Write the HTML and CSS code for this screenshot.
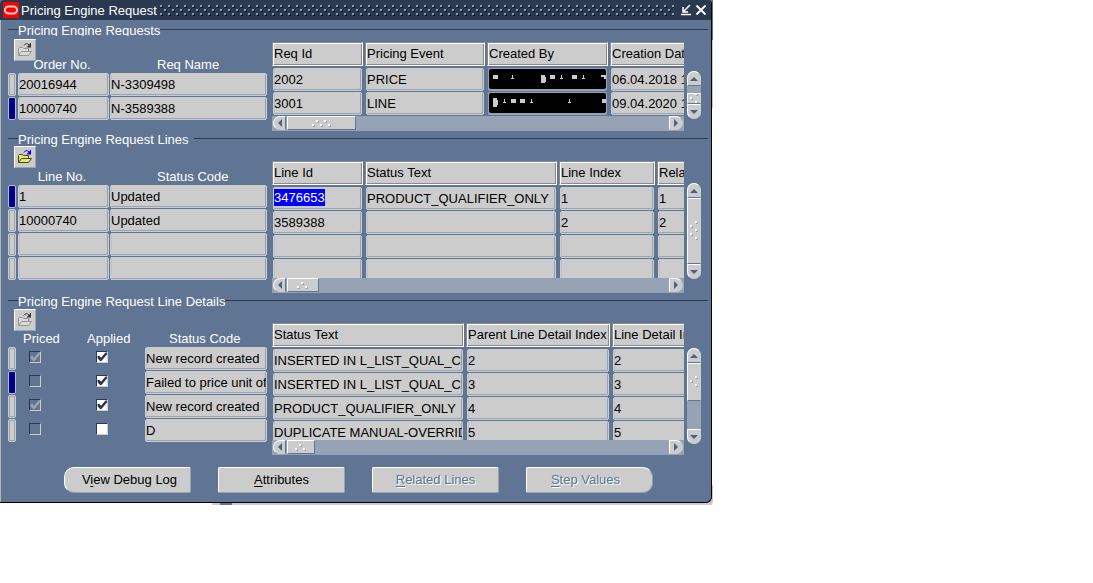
FILE: index.html
```html
<!DOCTYPE html>
<html lang="en">
<head>
<meta charset="utf-8">
<title>Pricing Engine Request</title>
<link rel="stylesheet" href="styles.css">
</head>
<body>
<svg class="defs" aria-hidden="true">
  <defs>
    <pattern id="grip" width="8" height="8" patternUnits="userSpaceOnUse">
      <path fill="#0b111b" d="M1 1h2v2h-2zM5 5h2v2h-2z"/>
      <path fill="#90a0b4" d="M0 0h2v2h-2zM4 4h2v2h-2z"/>
    </pattern>
    <symbol id="folder" viewBox="0 0 16 16">
      <path class="f-back" d="M1.500 13.500V6.500L2.500 5.500H5.500L6.500 6.500H11.500V9.500"/>
      <path class="f-front" d="M1.500 13.500L4.500 9.500H14.500L11.500 13.500Z"/>
      <path class="f-arrow" d="M7 3.500Q9 0 12 3"/>
      <path class="f-head" d="M14 0.500V5.500H9.500Z"/>
    </symbol>
    <symbol id="knobs" viewBox="0 0 20 9">
      <path fill="#95a3b5" d="M1 6h2v2h-2zM5 2h2v2h-2zM9 6h2v2h-2zM13 2h2v2h-2zM17 6h2v2h-2z"/>
      <path fill="#fff" d="M0 5h2v2h-2zM4 1h2v2h-2zM8 5h2v2h-2zM12 1h2v2h-2zM16 5h2v2h-2z"/>
    </symbol>
    <symbol id="knobs3" viewBox="0 0 12 9">
      <path fill="#95a3b5" d="M1 6h2v2h-2zM5 2h2v2h-2zM9 6h2v2h-2z"/>
      <path fill="#fff" d="M0 5h2v2h-2zM4 1h2v2h-2zM8 5h2v2h-2z"/>
    </symbol>
    <symbol id="vknobs" viewBox="0 0 9 20">
      <path fill="#95a3b5" d="M6 1h2v2h-2zM1 5h2v2h-2zM6 9h2v2h-2zM1 13h2v2h-2zM6 17h2v2h-2z"/>
      <path fill="#fff" d="M5 0h2v2h-2zM0 4h2v2h-2zM5 8h2v2h-2zM0 12h2v2h-2zM5 16h2v2h-2z"/>
    </symbol>
    <symbol id="vknobs3" viewBox="0 0 9 12">
      <path fill="#95a3b5" d="M6 1h2v2h-2zM1 5h2v2h-2zM6 9h2v2h-2z"/>
      <path fill="#fff" d="M5 0h2v2h-2zM0 4h2v2h-2zM5 8h2v2h-2z"/>
    </symbol>
    <symbol id="left" viewBox="0 0 8 8"><path fill="#4a6285" d="M6 0v8L2 4z"/></symbol>
    <symbol id="right" viewBox="0 0 8 8"><path fill="#4a6285" d="M2 0v8l4-4z"/></symbol>
    <symbol id="up" viewBox="0 0 8 8"><path fill="#4a6285" d="M0 6h8L4 2z"/></symbol>
    <symbol id="down" viewBox="0 0 8 8"><path fill="#4a6285" d="M0 2h8L4 6z"/></symbol>
  </defs>
</svg>
<div class="frame">
<main class="window">
  <header class="titlebar">
    <svg class="logo" viewBox="0 0 16 16" aria-hidden="true"><rect width="16" height="16" fill="#f00"/><rect x="2" y="4.500" width="12" height="7" rx="3.500" fill="none" stroke="#ffd0d0" stroke-width="2"/></svg>
    <h1>Pricing Engine Request</h1>
    <svg class="grip" aria-hidden="true"><rect width="100%" height="11" fill="url(#grip)"/></svg>
    <button class="winbtn" aria-label="Minimize"><svg viewBox="0 0 12 12"><path d="M10 1L4 7M3 3v5h5M1 10.500h10" fill="none" stroke="#fff" stroke-width="1.500"/></svg></button>
    <button class="winbtn" aria-label="Close"><svg viewBox="0 0 12 12"><path d="M1.500 1.500l9 9M10.500 1.500l-9 9" fill="none" stroke="#fff" stroke-width="1.800"/></svg></button>
  </header>

  <section class="requests">
    <h2 class="legend clipped"><span>Pricing Engine Requests</span></h2>
    <div class="block">
      <div class="pane">
        <button class="folder" disabled aria-label="Open request folder"><svg><use href="#folder"/></svg></button>
        <table class="fixed">
          <colgroup><col class="c-mark"><col class="c-no"><col></colgroup>
          <thead><tr><td></td><th class="mid">Order No.</th><th class="name">Req Name</th></tr></thead>
          <tbody>
            <tr><td><button class="mark" aria-label="Select request 1"></button></td><td><input aria-label="Order No. 1" value="20016944"></td><td><input aria-label="Req Name 1" value="N-3309498"></td></tr>
            <tr><td><button class="mark current" aria-label="Select request 2"></button></td><td><input aria-label="Order No. 2" value="10000740"></td><td><input aria-label="Req Name 2" value="N-3589388"></td></tr>
          </tbody>
        </table>
      </div>
      <div class="grid">
        <div class="view">
          <table>
            <colgroup><col class="w93"><col class="w122"><col class="w123"><col class="w123"></colgroup>
            <thead><tr><th><div>Req Id</div></th><th><div>Pricing Event</div></th><th><div>Created By</div></th><th><div>Creation Date</div></th></tr></thead>
            <tbody>
              <tr><td><input aria-label="Req Id 1" value="2002"></td><td><input aria-label="Pricing Event 1" value="PRICE"></td>
                <td><div class="hidden-name"><svg role="img" aria-label="Hidden"><path d="M4 6h5v4h-5zM23 6h1v3h1v1h-3v-1h1zM52 6h4v2h1v5h-1v1h-4zM61 6h5v4h-5zM72 6h1v3h1v1h-3v-1h1zM83 6h5v4h-5zM94 6h1v3h1v1h-3v-1h1zM112 6h5v4h-2v-2h-3z"/></svg></div></td>
                <td><input aria-label="Creation Date 1" value="06.04.2018 11:02"></td></tr>
              <tr><td><input aria-label="Req Id 2" value="3001"></td><td><input aria-label="Pricing Event 2" value="LINE"></td>
                <td><div class="hidden-name"><svg role="img" aria-label="Hidden"><path d="M4 5h4v2h1v5h-1v2h-4zM15 6h1v3h1v1h-3v-1h1zM22 6h5v4h-5zM31 6h5v4h-5zM42 6h1v3h1v1h-3v-1h1zM80 6h1v3h1v1h-3v-1h1zM113 6h4v4h-4z"/></svg></div></td>
                <td><input aria-label="Creation Date 2" value="09.04.2020 11:02"></td></tr>
            </tbody>
          </table>
        </div>
        <div class="hscroll"><button class="end first" aria-label="Scroll left"><svg><use href="#left"/></svg></button><div class="thumb long"><svg class="k5"><use href="#knobs"/></svg></div><button class="end last" aria-label="Scroll right"><svg><use href="#right"/></svg></button></div>
      </div>
      <div class="vscroll"><button class="end top" aria-label="Scroll up"><svg><use href="#up"/></svg></button><span class="track"></span><div class="thumb tiny"><svg class="v3"><use href="#vknobs3"/></svg></div><button class="end bottom" aria-label="Scroll down"><svg><use href="#down"/></svg></button></div>
    </div>
  </section>

  <section class="lines">
    <h2 class="legend spaced"><span>Pricing Engine Request Lines</span></h2>
    <div class="block">
      <div class="pane">
        <button class="folder" aria-label="Open line folder"><svg><use href="#folder"/></svg></button>
        <table class="fixed">
          <colgroup><col class="c-mark"><col class="c-no"><col></colgroup>
          <thead><tr><td></td><th class="mid">Line No.</th><th class="name">Status Code</th></tr></thead>
          <tbody>
            <tr><td><button class="mark current" aria-label="Select line 1"></button></td><td><input aria-label="Line No. 1" value="1"></td><td><input aria-label="Status Code 1" value="Updated"></td></tr>
            <tr><td><button class="mark" aria-label="Select line 2"></button></td><td><input aria-label="Line No. 2" value="10000740"></td><td><input aria-label="Status Code 2" value="Updated"></td></tr>
            <tr><td><button class="mark" aria-label="Select line 3"></button></td><td><input aria-label="Line No. 3"></td><td><input aria-label="Status Code 3"></td></tr>
            <tr><td><button class="mark" aria-label="Select line 4"></button></td><td><input aria-label="Line No. 4"></td><td><input aria-label="Status Code 4"></td></tr>
          </tbody>
        </table>
      </div>
      <div class="grid">
        <div class="view">
          <table>
            <colgroup><col class="w93"><col class="w194"><col class="w98"><col class="w98"></colgroup>
            <thead><tr><th><div>Line Id</div></th><th><div>Status Text</div></th><th><div>Line Index</div></th><th><div>Related Line</div></th></tr></thead>
            <tbody>
              <tr><td><div class="field" role="textbox" aria-label="Line Id 1"><mark>3476653</mark></div></td><td><input aria-label="Status Text 1" value="PRODUCT_QUALIFIER_ONLY"></td><td><input aria-label="Line Index 1" value="1"></td><td><input aria-label="Related Line 1" value="1"></td></tr>
              <tr><td><input aria-label="Line Id 2" value="3589388"></td><td><input aria-label="Status Text 2"></td><td><input aria-label="Line Index 2" value="2"></td><td><input aria-label="Related Line 2" value="2"></td></tr>
              <tr><td><input aria-label="Line Id 3"></td><td><input aria-label="Status Text 3"></td><td><input aria-label="Line Index 3"></td><td><input aria-label="Related Line 3"></td></tr>
              <tr><td><input aria-label="Line Id 4"></td><td><input aria-label="Status Text 4"></td><td><input aria-label="Line Index 4"></td><td><input aria-label="Related Line 4"></td></tr>
            </tbody>
          </table>
        </div>
        <div class="hscroll"><button class="end first" aria-label="Scroll left"><svg><use href="#left"/></svg></button><div class="thumb mini"><svg class="k3"><use href="#knobs3"/></svg></div><button class="end last" aria-label="Scroll right"><svg><use href="#right"/></svg></button></div>
      </div>
      <div class="vscroll"><button class="end top" aria-label="Scroll up"><svg><use href="#up"/></svg></button><div class="thumb full"><svg class="v5"><use href="#vknobs"/></svg></div><button class="end bottom" aria-label="Scroll down"><svg><use href="#down"/></svg></button></div>
    </div>
  </section>

  <section class="details">
    <h2 class="legend"><span>Pricing Engine Request Line Details</span></h2>
    <div class="block">
      <div class="pane">
        <button class="folder" disabled aria-label="Open detail folder"><svg><use href="#folder"/></svg></button>
        <table class="fixed">
          <colgroup><col class="c-mark"><col class="c-priced"><col class="c-applied"><col></colgroup>
          <thead><tr><td></td><th class="priced">Priced</th><th class="applied">Applied</th><th class="status">Status Code</th></tr></thead>
          <tbody>
            <tr><td><button class="mark" aria-label="Select detail 1"></button></td><td class="ck1"><input type="checkbox" aria-label="Priced 1" disabled checked></td><td class="ck2"><input type="checkbox" aria-label="Applied 1" checked></td><td><input aria-label="Detail Status Code 1" value="New record created"></td></tr>
            <tr><td><button class="mark current" aria-label="Select detail 2"></button></td><td class="ck1"><input type="checkbox" aria-label="Priced 2" disabled></td><td class="ck2"><input type="checkbox" aria-label="Applied 2" checked></td><td><input aria-label="Detail Status Code 2" value="Failed to price unit of"></td></tr>
            <tr><td><button class="mark" aria-label="Select detail 3"></button></td><td class="ck1"><input type="checkbox" aria-label="Priced 3" disabled checked></td><td class="ck2"><input type="checkbox" aria-label="Applied 3" checked></td><td><input aria-label="Detail Status Code 3" value="New record created"></td></tr>
            <tr><td><button class="mark" aria-label="Select detail 4"></button></td><td class="ck1"><input type="checkbox" aria-label="Priced 4" disabled></td><td class="ck2"><input type="checkbox" aria-label="Applied 4"></td><td><input aria-label="Detail Status Code 4" value="D"></td></tr>
          </tbody>
        </table>
      </div>
      <div class="grid">
        <div class="view">
          <table>
            <colgroup><col class="w194"><col class="w146"><col class="w146"></colgroup>
            <thead><tr><th><div>Status Text</div></th><th><div>Parent Line Detail Index</div></th><th><div>Line Detail Index</div></th></tr></thead>
            <tbody>
              <tr><td><input aria-label="Detail Status Text 1" value="INSERTED IN L_LIST_QUAL_CUR"></td><td><input aria-label="Parent Line Detail Index 1" value="2"></td><td><input aria-label="Line Detail Index 1" value="2"></td></tr>
              <tr><td><input aria-label="Detail Status Text 2" value="INSERTED IN L_LIST_QUAL_CUR"></td><td><input aria-label="Parent Line Detail Index 2" value="3"></td><td><input aria-label="Line Detail Index 2" value="3"></td></tr>
              <tr><td><input aria-label="Detail Status Text 3" value="PRODUCT_QUALIFIER_ONLY"></td><td><input aria-label="Parent Line Detail Index 3" value="4"></td><td><input aria-label="Line Detail Index 3" value="4"></td></tr>
              <tr><td><input aria-label="Detail Status Text 4" value="DUPLICATE MANUAL-OVERRIDE"></td><td><input aria-label="Parent Line Detail Index 4" value="5"></td><td><input aria-label="Line Detail Index 4" value="5"></td></tr>
            </tbody>
          </table>
        </div>
        <div class="hscroll"><button class="end first" aria-label="Scroll left"><svg><use href="#left"/></svg></button><div class="thumb micro"><svg class="k3"><use href="#knobs3"/></svg></div><button class="end last" aria-label="Scroll right"><svg><use href="#right"/></svg></button></div>
      </div>
      <div class="vscroll"><button class="end top" aria-label="Scroll up"><svg><use href="#up"/></svg></button><div class="thumb short"><svg class="v3"><use href="#vknobs3"/></svg></div><span class="track"></span><button class="end bottom" aria-label="Scroll down"><svg><use href="#down"/></svg></button></div>
    </div>
  </section>

  <footer class="actions">
    <button class="action">V<u>i</u>ew Debug Log</button>
    <button class="action"><u>A</u>ttributes</button>
    <button class="action" disabled><u>R</u>elated Lines</button>
    <button class="action" disabled><u>S</u>tep Values</button>
  </footer>
</main>
<div class="behind"></div>
</div>
</body>
</html>
```
FILE: styles.css
```css
* { box-sizing: border-box; }
body { margin: 0; background: #fff; font: 13px/16px "Liberation Sans", Arial, sans-serif; color: #000; }
button, input { font: inherit; color: inherit; margin: 0; padding: 0; border: 0; border-radius: 0; }
h1, h2 { margin: 0; font: inherit; color: #fff; }
svg { display: block; }
.defs { position: absolute; width: 0; height: 0; }

.frame { max-width: 713px; padding-right: 1px; background: linear-gradient(#607594 0 40px, #c9c9c9 40px 108px, #fff 108px 485px, #c9c9c9 485px 503px, #fff 503px); }
.window { background: #607594; border: 1px solid #000; border-width: 0 1px 1px 0; border-radius: 4px 4px 6px 0; box-shadow: inset 1px 0 #b5b5b5; overflow: hidden; }
.behind { height: 2px; margin-left: 212px; background: linear-gradient(90deg, #ccc 8px, #607594 8px 20px, #ccc 20px); }

.titlebar { display: flex; align-items: center; height: 20px; padding: 0 4px 0 3px; background: #2a3850; }
.logo { width: 16px; height: 16px; }
.titlebar h1 { padding: 2px 3px 0 2px; white-space: nowrap; }
.grip { flex: 1; height: 11px; min-width: 0; margin-right: 3px; }
.winbtn { width: 12px; height: 12px; margin-left: 3px; background: none; }
.winbtn svg { width: 12px; height: 12px; }

section { padding: 0 3px 0 8px; }
.requests { padding-top: 2px; }
.legend { display: flex; height: 14px; line-height: 18px; white-space: nowrap; }
.legend::before, .legend::after { content: ""; height: 1px; margin-top: 7px; background: #2a3850; }
.legend::before { width: 10px; }
.legend::after { flex: 1; }
.clipped { overflow: hidden; }
.spaced span { padding-right: 5px; }

.block { display: grid; grid-template-columns: 264px minmax(0, 1fr) 14px; padding-right: 7px; }
.pane { padding-right: 4px; }
.folder { display: block; width: 22px; height: 22px; margin-left: 6px; padding: 2px; background: #ccc; border: 1px solid; border-color: #fff #95a3b5 #95a3b5 #fff; }
.folder svg { width: 16px; height: 16px; stroke: #4a4a00; fill: #e4e480; }
.f-arrow { fill: none; stroke: #00f; stroke-width: 1px; }
.f-head { fill: #00f; stroke: none; }
.folder:disabled svg { stroke: #888; fill: #ddd; filter: grayscale(1); opacity: 0.8; }

table { table-layout: fixed; width: 100%; border-collapse: collapse; }
td, th { padding: 0; font-weight: normal; text-align: left; vertical-align: top; }
tbody td { height: 24px; padding-right: 1px; }
.fixed th { color: #fff; height: 16px; white-space: nowrap; }
.c-mark { width: 10px; }
.c-no { width: 92px; }
.c-priced { width: 46px; }
.c-applied { width: 81px; }
.fixed .mid { text-align: center; padding-right: 4px; }
.fixed .name { padding-left: 47px; }
.fixed .priced { padding-left: 5px; }
.fixed .applied { padding-left: 23px; }
.fixed .status { padding-left: 24px; }

input, .field { display: block; width: 100%; height: 23px; padding: 0; line-height: 20px; background: #ccc; border: 1px solid #ccc; border-radius: 2px; box-shadow: inset -1px -1px #95a3b5, inset 1px 0 #bcc3cc; outline: 0; }
mark { display: inline-block; background: #00f; color: #fff; line-height: 17px; }
.mark { display: block; width: 8px; height: 23px; background: #ccc; border: 1px solid #ccc; border-radius: 2px; box-shadow: inset 0 0 0 1px #95a3b5; }
.current { background: #00008b; box-shadow: none; border-color: #b4bdc9; }

input[type=checkbox] { appearance: none; width: 12px; height: 12px; margin-top: 4px; background: #fff; border-radius: 0; border-color: #2a3850 #ccc #ccc #2a3850; box-shadow: none; }
input[type=checkbox]:disabled { background: #607594; }
input[type=checkbox]:checked::before { content: ""; display: block; width: 10px; height: 10px; background: #2a3850; clip-path: polygon(5% 40%, 25% 40%, 40% 58%, 85% 5%, 100% 5%, 100% 25%, 45% 90%, 30% 90%, 5% 62%); }
input[type=checkbox]:disabled:checked::before { background: #95a3b5; }
.fixed .ck1 { padding-left: 11px; }
.fixed .ck2 { padding-left: 32px; }

.grid { min-width: 0; padding-right: 3px; }
.view { overflow: hidden; }
.view table { width: 1px; }
.view th { height: 26px; padding-right: 2px; }
.view th div { height: 24px; padding: 3px 0 0 1px; white-space: nowrap; background: #ccc; border: 1px solid; border-color: #8a8a8a #fff #fff #8a8a8a; box-shadow: inset 1px 1px #fff, inset -1px -1px #8a8a8a; }
.view tbody td { padding: 0 3px 0 1px; }
.w93 { width: 93px; }
.w98 { width: 98px; }
.w122 { width: 122px; }
.w123 { width: 123px; }
.w146 { width: 146px; }
.w194 { width: 194px; }
.hidden-name { height: 23px; padding: 1px 1px 2px; background: #95a3b5; border-radius: 2px; }
.hidden-name svg { width: 100%; height: 20px; background: #000; border-radius: 2px; fill: #ccc; }

.hscroll { display: flex; height: 15px; padding: 0 1px; background: #95a3b5; }
.end { display: flex; align-items: center; justify-content: center; width: 14px; height: 14px; flex: none; background: #ccc; border: 1px solid; border-color: #fff #607594 #ccc #fff; }
.end svg { width: 8px; height: 8px; }
.first { width: 13px; border-radius: 7px 0 0 7px; }
.last { margin-left: auto; border-right-color: #ccc; border-radius: 0 7px 7px 0; }
.thumb { display: flex; align-items: center; justify-content: center; background: #ccc; border: 1px solid; border-color: #fff #607594 #607594 #fff; }
.hscroll .thumb { height: 14px; margin-left: 1px; }
.long { width: 69px; }
.mini { width: 32px; }
.micro { width: 28px; }
.k5 { width: 20px; height: 9px; }
.k3 { width: 12px; height: 9px; }
.v5 { width: 9px; height: 20px; }
.v3 { width: 9px; height: 12px; }

.vscroll { display: flex; flex-direction: column; background: #95a3b5; border-radius: 7px; }
.top { height: 15px; border-radius: 7px 7px 0 0; border-color: #fff #ccc #607594 #fff; }
.bottom { height: 15px; border-radius: 0 0 7px 7px; border-right-color: #ccc; }
.vscroll .thumb { border-right-color: #ccc; }
.track { flex: 1; }
.tiny { height: 11px; overflow: hidden; }
.full { flex: 1; }
.short { height: 38px; }

.requests .folder { margin-top: 3px; }
.requests .fixed { margin-top: -4px; }
.requests .grid { padding-top: 6px; }
.requests .vscroll { margin: 35px 0 12px; }
.lines .folder { margin-top: 1px; }
.lines .fixed { margin-top: 1px; }
.lines .grid, .details .grid { padding-top: 16px; }
.lines .view, .details .view { height: 117px; }
.lines .vscroll { margin: 38px 0 14px; }
.details .folder { margin-top: 2px; }
.details .vscroll { margin: 41px 0 11px; }

.actions { display: flex; flex-wrap: wrap; gap: 27px; padding: 12px 0 9px 64px; }
.action { width: 127px; height: 26px; background: #ccc; border: 1px solid; border-color: #fff #95a3b5 #95a3b5 #fff; border-radius: 2px; }
.action:first-child { padding-left: 4px; border-radius: 10px 2px 2px 10px; }
.action:last-child { padding-right: 8px; border-radius: 2px 10px 10px 2px; }
.action:disabled { color: #607594; text-shadow: 1px 1px #fff; }
.action u { text-underline-offset: 2px; }
```
